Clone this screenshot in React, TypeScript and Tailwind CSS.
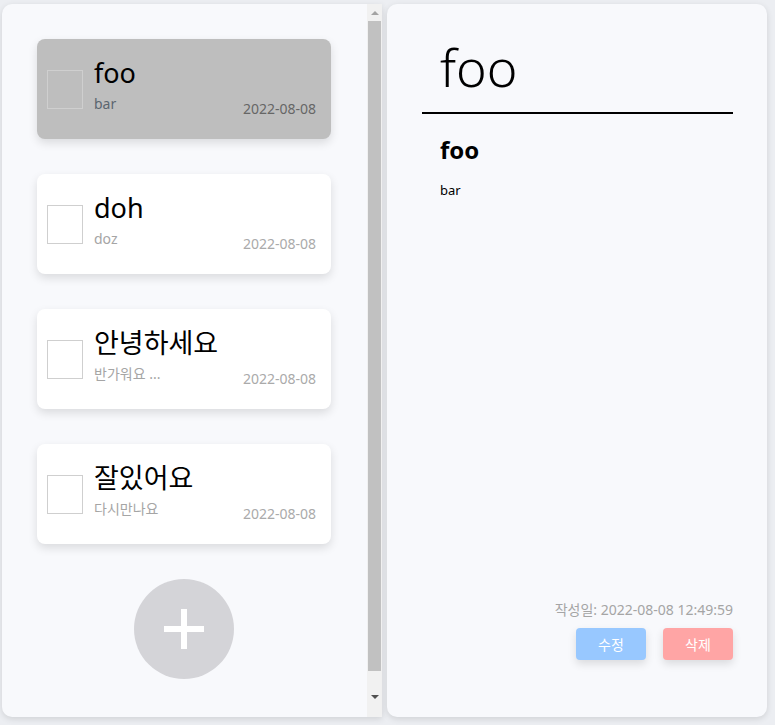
import React from 'react'

const notes = [
  { id: 1, title: 'foo', body: 'bar', date: '2022-08-08' },
  { id: 2, title: 'doh', body: 'doz', date: '2022-08-08' },
  { id: 3, title: '안녕하세요', body: '반가워요 ...', date: '2022-08-08' },
  { id: 4, title: '잘있어요', body: '다시만나요', date: '2022-08-08' },
]

const font = { fontFamily: '"Noto Sans", "Noto Sans CJK KR", sans-serif' }

function NoteCard({ note, selected }: { note: (typeof notes)[number]; selected: boolean }) {
  return (
    <div
      className={
        'flex h-[100px] items-center rounded-[8px] pl-[10px] pr-[15px] shadow-[0_4px_10px_rgba(0,0,0,0.12)] ' +
        (selected ? 'bg-[#bebebe]' : 'bg-white')
      }
    >
      <div className="h-[39px] w-[36px] shrink-0 border border-[#cfcfcf]" />
      <div className="ml-[11px] flex flex-1 flex-col pb-[3px]">
        <div className="text-[27px] leading-[30px] text-black">{note.title}</div>
        <div className="mt-[7px] flex items-start justify-between">
          <span className={'text-[14px] leading-[18px] ' + (selected ? 'text-[#5b6670]' : 'text-[#a5a5a5]')}>
            {note.body}
          </span>
          <span className={'pt-[5px] text-[14px] leading-[18px] ' + (selected ? 'text-[#666]' : 'text-[#aaa]')}>
            {note.date}
          </span>
        </div>
      </div>
    </div>
  )
}

function Scrollbar() {
  return (
    <div className="flex w-[15px] shrink-0 flex-col items-center bg-[#f1f1f1]">
      <div className="flex h-[17px] items-center justify-center">
        <span className="h-0 w-0 border-x-[4px] border-b-[4px] border-x-transparent border-b-[#a3a3a3]" />
      </div>
      <div className="h-[650px] w-[13px] bg-[#c1c1c1]" />
      <div className="flex flex-1 items-center justify-center pt-[6px]">
        <span className="h-0 w-0 border-x-[4px] border-t-[4px] border-x-transparent border-t-[#505050]" />
      </div>
    </div>
  )
}

export default function App() {
  return (
    <div className="flex h-[725px] gap-[5px] bg-[#eceef2] pl-[2px] pt-[4px]" style={font}>
      <div className="flex h-[713px] w-[380px] overflow-hidden rounded-l-[10px] bg-[#f8f9fc] shadow-[0_2px_6px_rgba(0,0,0,0.12)]">
        <div className="flex flex-1 flex-col gap-[35px] pl-[35px] pr-[36px] pt-[35px]">
          {notes.map((n, i) => (
            <NoteCard key={n.id} note={n} selected={i === 0} />
          ))}
          <div className="flex justify-center">
            <button className="relative flex h-[100px] w-[100px] items-center justify-center rounded-full bg-[#d4d4d8]">
              <span className="absolute h-[6px] w-[40px] bg-white" />
              <span className="absolute h-[40px] w-[6px] bg-white" />
            </button>
          </div>
        </div>
        <Scrollbar />
      </div>
      <div className="flex h-[713px] w-[380px] flex-col rounded-[10px] bg-[#f8f9fc] pl-[35px] pr-[34px] shadow-[0_2px_6px_rgba(0,0,0,0.12)]">
        <div className="border-b-2 border-black px-[18px] pt-[30px] pb-[12px] text-[52px] font-light leading-[66px] text-black">
          foo
        </div>
        <div className="px-[18px] pt-[20px] text-[24px] font-bold leading-[32px] text-black">foo</div>
        <div className="px-[18px] pt-[15px] text-[13px] leading-[18px] text-black">bar</div>
        <div className="mt-auto mb-[57px] flex flex-col items-end">
          <div className="text-[14px] leading-[20px] text-[#a5a5a5]">작성일: 2022-08-08 12:49:59</div>
          <div className="mt-[8px] flex gap-[17px]">
            <button className="h-[32px] w-[70px] rounded-[4px] bg-[#98c8ff] text-[14px] text-white shadow-[0_4px_8px_rgba(0,0,0,0.12)]">
              수정
            </button>
            <button className="h-[32px] w-[70px] rounded-[4px] bg-[#ffa5a5] text-[14px] text-white shadow-[0_4px_8px_rgba(0,0,0,0.12)]">
              삭제
            </button>
          </div>
        </div>
      </div>
    </div>
  )
}
